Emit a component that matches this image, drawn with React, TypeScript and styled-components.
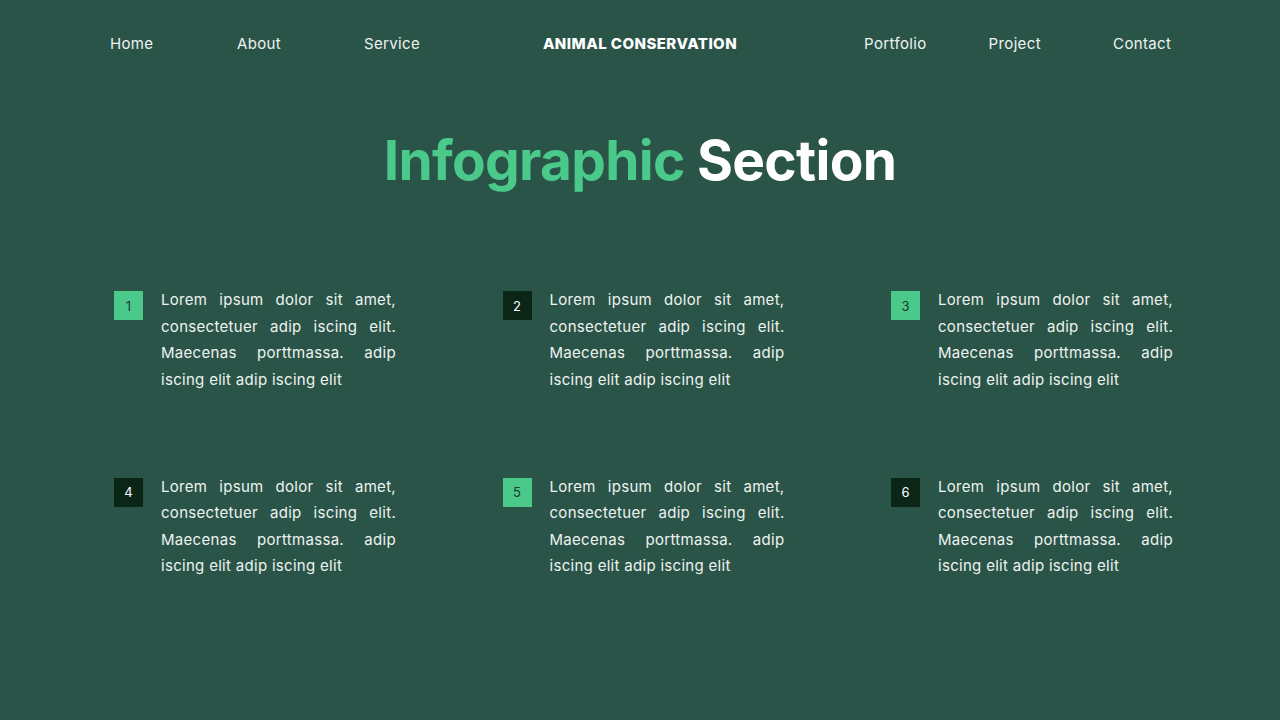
import React from "react";
import styled, { createGlobalStyle } from "styled-components";

const GlobalStyle = createGlobalStyle`
  html, body {
    margin: 0;
    padding: 0;
    background: #2a5448;
  }
  body {
    font-family: "Inter", "Open Sans", sans-serif;
    color: #f1f5f2;
  }
`;

const Page = styled.div`
  width: 1280px;
  height: 720px;
  background: #2a5448;
  overflow: hidden;
`;

const Header = styled.header`
  height: 86px;
  display: grid;
  grid-template-columns: 1fr auto 1fr;
  align-items: center;
`;

const NavGroup = styled.nav<{ $pad: number; $cell: number }>`
  display: grid;
  grid-template-columns: repeat(3, ${(p) => p.$cell}px);
  padding-left: ${(p) => p.$pad}px;
`;

const NavLink = styled.a`
  font-size: 15px;
  letter-spacing: 0.35px;
  color: #eef3f0;
  text-decoration: none;
  white-space: nowrap;
`;

const Brand = styled.div`
  font-size: 15px;
  font-weight: 800;
  letter-spacing: 0.45px;
  color: #ffffff;
`;

const Heading = styled.h1`
  margin: 41px 0 0;
  text-align: center;
  font-size: 55px;
  line-height: 67px;
  font-weight: 700;
  color: #ffffff;
  letter-spacing: -0.7px;
`;

const Accent = styled.span`
  color: #4ac98a;
`;

const Grid = styled.section`
  margin: 93px 0 0 114px;
  width: 1059px;
  display: grid;
  grid-template-columns: repeat(3, 282px);
  column-gap: 106.5px;
  row-gap: 80.5px;
`;

const Item = styled.div`
  display: flex;
  align-items: flex-start;
  gap: 18px;
`;

const Badge = styled.div<{ $dark: boolean }>`
  flex: 0 0 29px;
  height: 29px;
  margin-top: 4px;
  display: flex;
  align-items: center;
  justify-content: center;
  font-size: 13px;
  background: ${(p) => (p.$dark ? "#0b2517" : "#4ac98a")};
  color: ${(p) => (p.$dark ? "#ffffff" : "#1d3a2c")};
`;

const Text = styled.div`
  width: 235px;
  font-size: 15px;
  line-height: 26.5px;
  letter-spacing: 0.3px;
  color: #eef3f0;
`;

const Line = styled.span<{ $last?: boolean }>`
  display: block;
  white-space: nowrap;
  text-align: ${(p) => (p.$last ? "left" : "justify")};
  text-align-last: ${(p) => (p.$last ? "left" : "justify")};
`;

const lines = [
  "Lorem ipsum dolor sit amet,",
  "consectetuer adip iscing elit.",
  "Maecenas porttmassa. adip",
  "iscing elit adip iscing elit",
];

const items = [
  { n: 1, dark: false },
  { n: 2, dark: true },
  { n: 3, dark: false },
  { n: 4, dark: true },
  { n: 5, dark: false },
  { n: 6, dark: true },
];

const App: React.FC = () => {
  return (
    <>
      <GlobalStyle />
      <Page>
        <Header>
          <NavGroup $pad={110} $cell={127}>
            <NavLink>Home</NavLink>
            <NavLink>About</NavLink>
            <NavLink>Service</NavLink>
          </NavGroup>
          <Brand>ANIMAL CONSERVATION</Brand>
          <NavGroup $pad={127} $cell={124.5}>
            <NavLink>Portfolio</NavLink>
            <NavLink>Project</NavLink>
            <NavLink>Contact</NavLink>
          </NavGroup>
        </Header>

        <Heading>
          <Accent>Infographic</Accent> Section
        </Heading>

        <Grid>
          {items.map((item) => (
            <Item key={item.n}>
              <Badge $dark={item.dark}>{item.n}</Badge>
              <Text>
                {lines.map((l, i) => (
                  <Line key={i} $last={i === lines.length - 1}>
                    {l}
                  </Line>
                ))}
              </Text>
            </Item>
          ))}
        </Grid>
      </Page>
    </>
  );
};

export default App;
